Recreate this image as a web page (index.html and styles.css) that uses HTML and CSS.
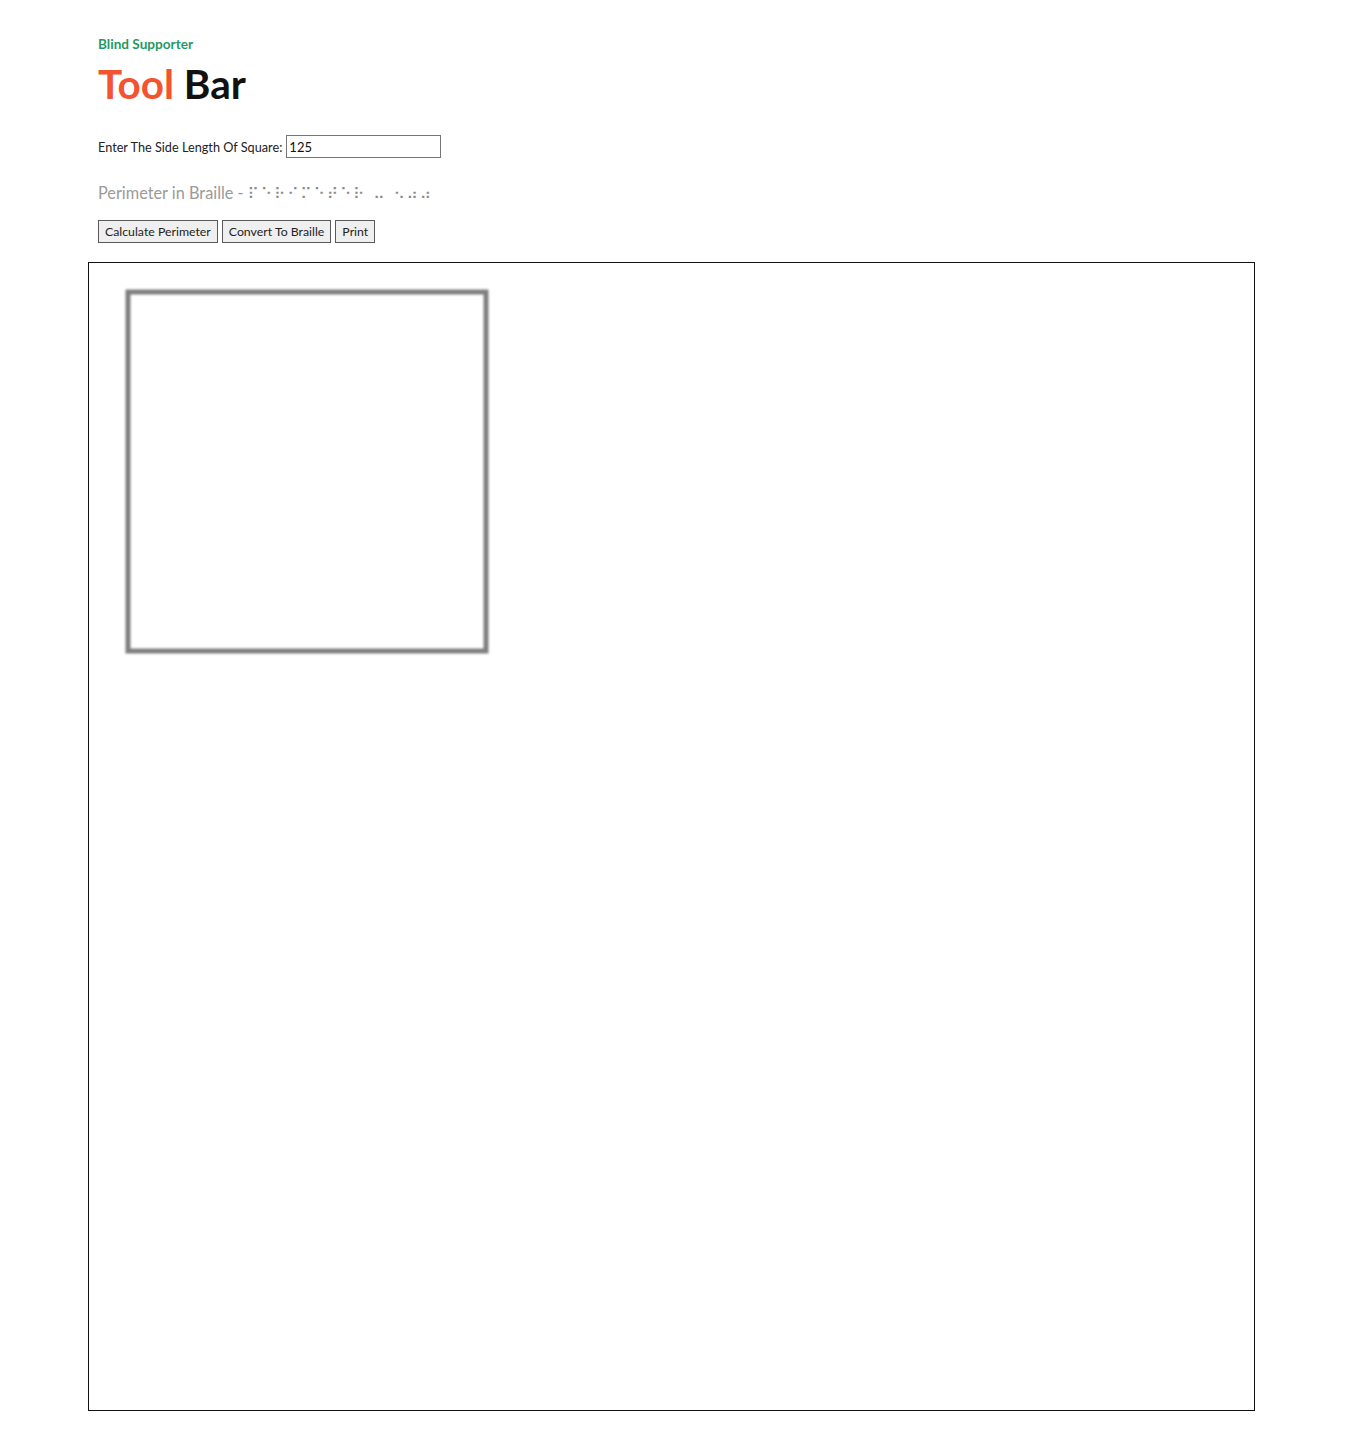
FILE: index.html
```html
<!DOCTYPE html>
<html lang="en">
<head>
<meta charset="utf-8">
<title>Tool Bar</title>
<link rel="stylesheet" href="styles.css">
</head>
<body>
<main class="page">
  <header class="intro">
    <p class="eyebrow">Blind Supporter</p>
    <h1 class="title"><span class="accent">Tool</span> Bar</h1>
  </header>
  <div class="form">
    <label class="field-label" for="side">Enter The Side Length Of Square:</label>
    <input class="field-input" id="side" type="text" value="125">
  </div>
  <p class="result">Perimeter in Braille - <span class="braille">⠏⠑⠗⠊⠍⠑⠞⠑⠗ ⠤ ⠢⠴⠴</span></p>
  <div class="actions">
    <button class="btn" type="button">Calculate Perimeter</button>
    <button class="btn" type="button">Convert To Braille</button>
    <button class="btn" type="button">Print</button>
  </div>
  <div class="canvas">
    <svg class="drawing" width="1165" height="1147" viewBox="0 0 1165 1147" xmlns="http://www.w3.org/2000/svg">
      <defs>
        <filter id="soft" x="-10%" y="-10%" width="120%" height="120%">
          <feGaussianBlur stdDeviation="0.9"/>
        </filter>
      </defs>
      <rect x="39" y="29" width="358" height="359" fill="none" stroke="#7f7f7f" stroke-width="5" filter="url(#soft)"/>
    </svg>
  </div>
</main>
</body>
</html>
```

FILE: styles.css
```css
body {
  margin: 8px;
  background: #ffffff;
  font-family: "Lato", "Noto Sans", sans-serif;
  color: #222;
}

.page {
  margin-left: 80px;
  width: 1167px;
}

.intro {
  padding-left: 10px;
  padding-top: 27px;
}

.eyebrow {
  margin: 0;
  font-size: 13.6px;
  font-weight: 700;
  color: #1f9a66;
  line-height: 18px;
}

.title {
  margin: 6px 0 0;
  font-size: 40.5px;
  line-height: 50px;
  font-weight: 700;
  color: #111;
  letter-spacing: 0;
}

.accent {
  color: #f4532f;
}

.form {
  padding-left: 10px;
  margin-top: 26px;
  display: flex;
  align-items: center;
  gap: 4px;
}

.field-label {
  font-size: 12.7px;
  color: #222;
}

.field-input {
  width: 149px;
  height: 19px;
  padding: 1px 2px;
  border: 1px solid #767676;
  font-family: "Lato", "Noto Sans", sans-serif;
  font-size: 13px;
  color: #111;
  margin: 0;
}

.result {
  padding-left: 10px;
  margin: 23px 0 0;
  font-size: 16.3px;
  line-height: 24px;
  color: #9a9a9a;
}

.braille {
  font-family: "DejaVu Sans", sans-serif;
  font-size: 15px;
  letter-spacing: 2.2px;
  color: #8a8a8a;
}

.actions {
  padding-left: 10px;
  margin-top: 14px;
  display: flex;
  gap: 4px;
}

.btn {
  height: 23px;
  padding: 0 6px;
  border: 1px solid #5a5a5a;
  background: #efefef;
  font-family: "Lato", "Noto Sans", sans-serif;
  font-size: 12.3px;
  color: #222;
  border-radius: 0;
  margin: 0;
}

.canvas {
  margin-top: 19px;
  border: 1px solid #111;
  width: 1165px;
  height: 1147px;
}

.drawing {
  display: block;
}
```
